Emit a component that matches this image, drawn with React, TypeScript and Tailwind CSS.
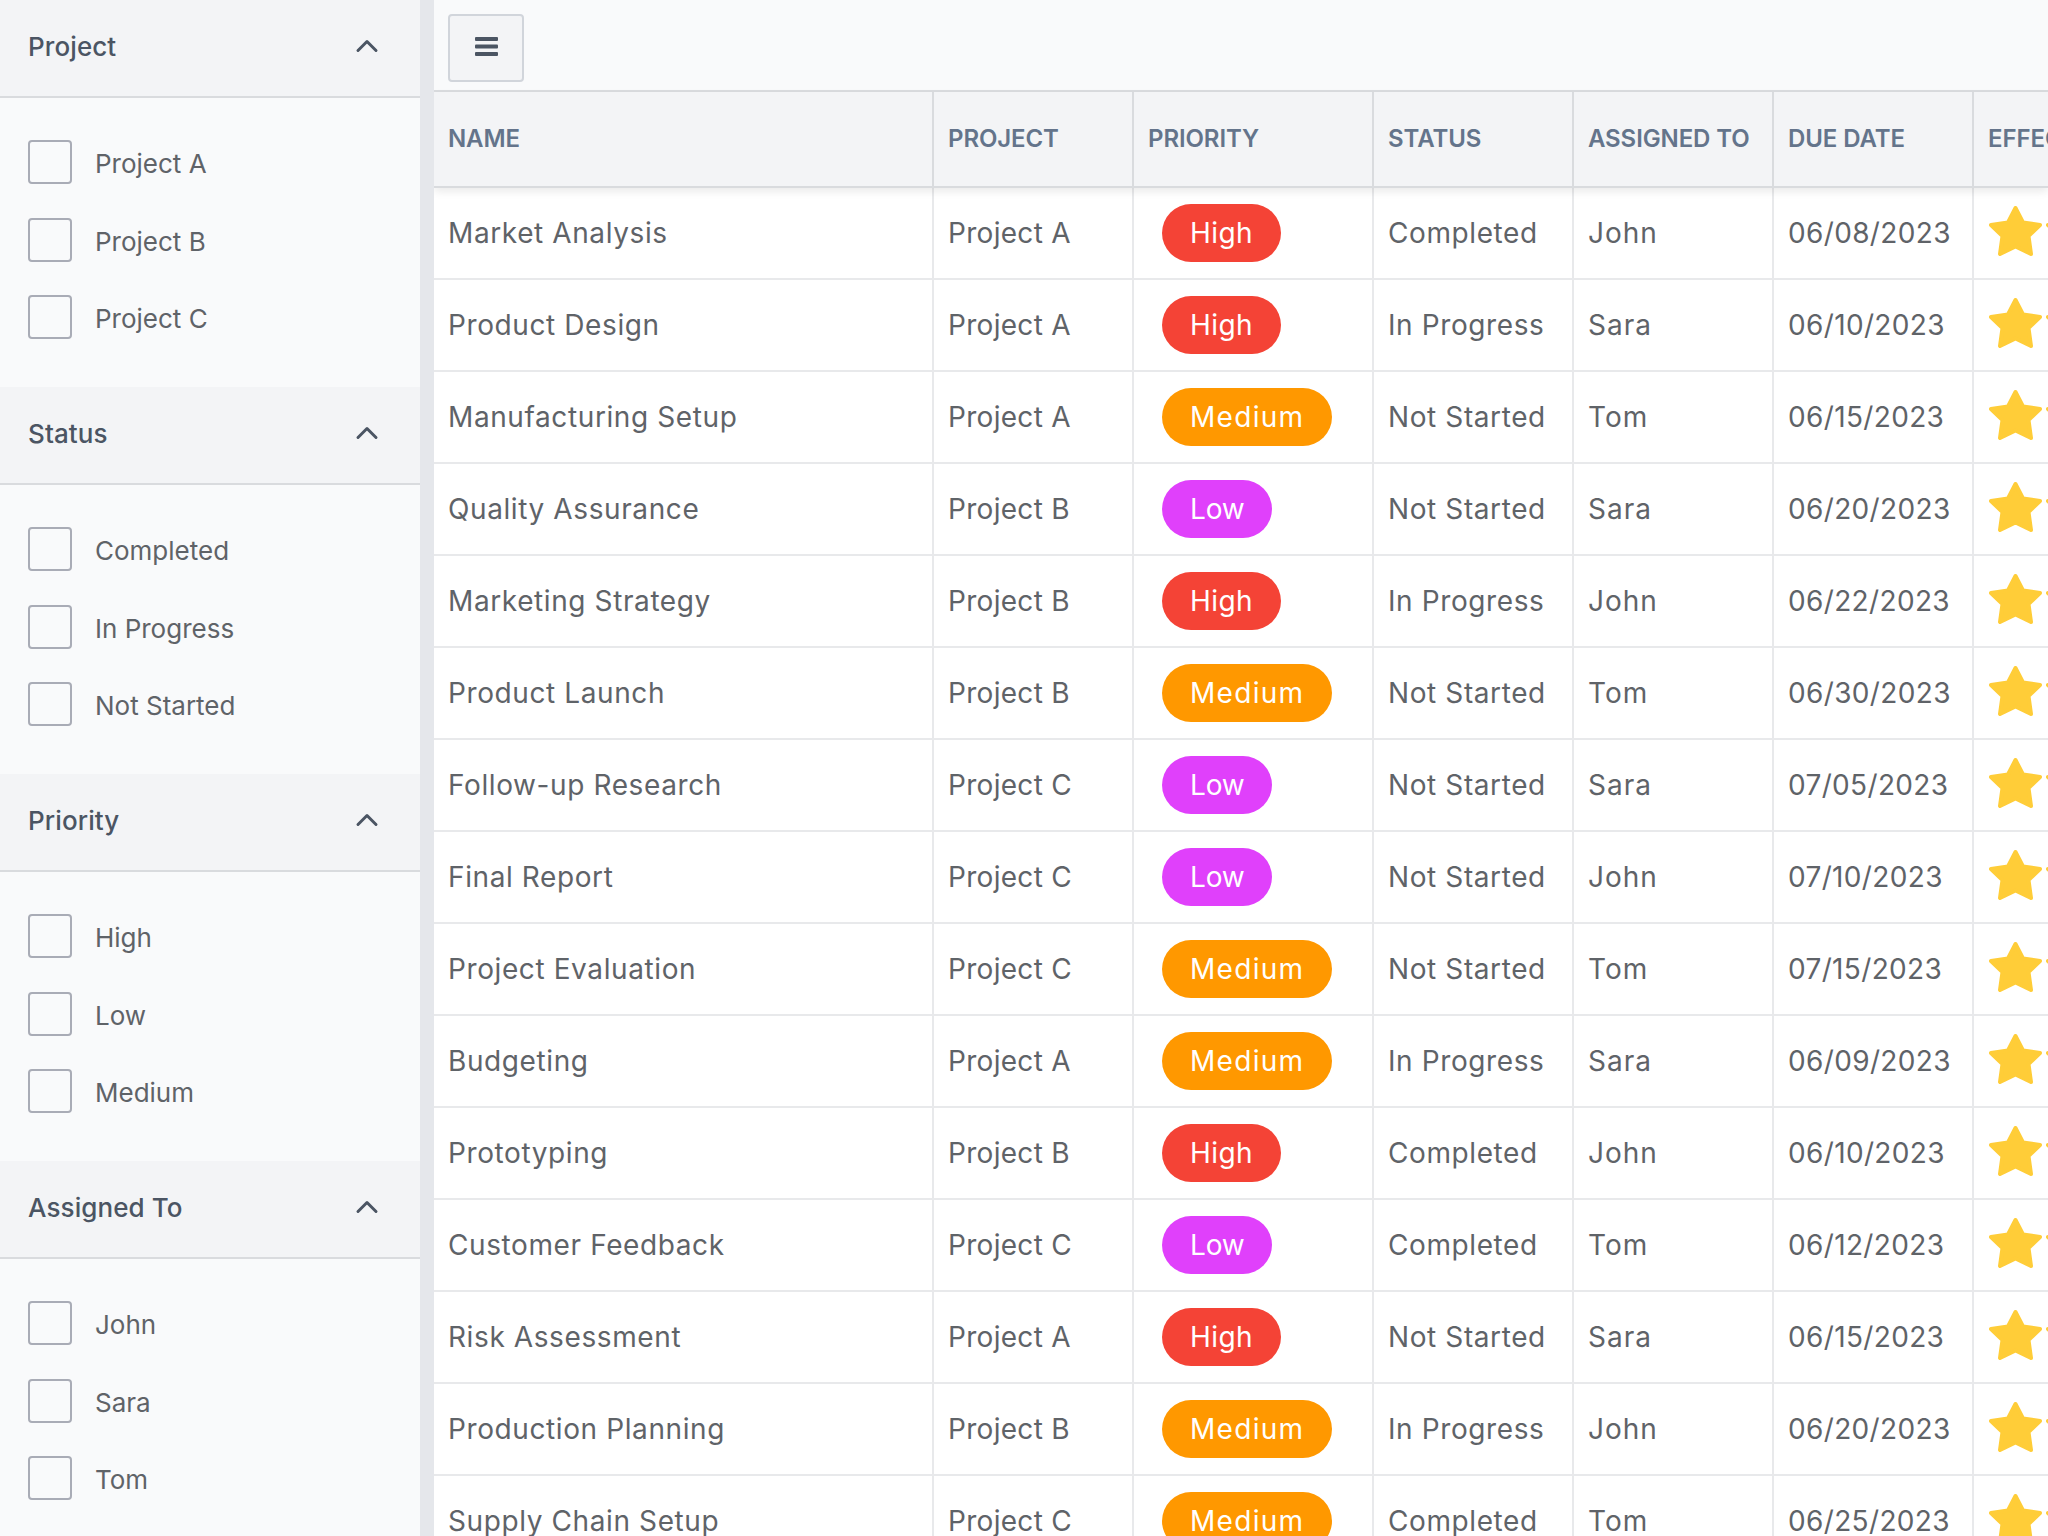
import { ChevronUp } from "lucide-react";

const font = { fontFamily: "Inter, sans-serif" };

type Priority = "High" | "Medium" | "Low";

interface Task {
  name: string;
  project: string;
  priority: Priority;
  status: string;
  assigned: string;
  due: string;
}

const tasks: Task[] = [
  { name: "Market Analysis", project: "Project A", priority: "High", status: "Completed", assigned: "John", due: "06/08/2023" },
  { name: "Product Design", project: "Project A", priority: "High", status: "In Progress", assigned: "Sara", due: "06/10/2023" },
  { name: "Manufacturing Setup", project: "Project A", priority: "Medium", status: "Not Started", assigned: "Tom", due: "06/15/2023" },
  { name: "Quality Assurance", project: "Project B", priority: "Low", status: "Not Started", assigned: "Sara", due: "06/20/2023" },
  { name: "Marketing Strategy", project: "Project B", priority: "High", status: "In Progress", assigned: "John", due: "06/22/2023" },
  { name: "Product Launch", project: "Project B", priority: "Medium", status: "Not Started", assigned: "Tom", due: "06/30/2023" },
  { name: "Follow-up Research", project: "Project C", priority: "Low", status: "Not Started", assigned: "Sara", due: "07/05/2023" },
  { name: "Final Report", project: "Project C", priority: "Low", status: "Not Started", assigned: "John", due: "07/10/2023" },
  { name: "Project Evaluation", project: "Project C", priority: "Medium", status: "Not Started", assigned: "Tom", due: "07/15/2023" },
  { name: "Budgeting", project: "Project A", priority: "Medium", status: "In Progress", assigned: "Sara", due: "06/09/2023" },
  { name: "Prototyping", project: "Project B", priority: "High", status: "Completed", assigned: "John", due: "06/10/2023" },
  { name: "Customer Feedback", project: "Project C", priority: "Low", status: "Completed", assigned: "Tom", due: "06/12/2023" },
  { name: "Risk Assessment", project: "Project A", priority: "High", status: "Not Started", assigned: "Sara", due: "06/15/2023" },
  { name: "Production Planning", project: "Project B", priority: "Medium", status: "In Progress", assigned: "John", due: "06/20/2023" },
  { name: "Supply Chain Setup", project: "Project C", priority: "Medium", status: "Completed", assigned: "Tom", due: "06/25/2023" },
];

const filters = [
  { title: "Project", options: ["Project A", "Project B", "Project C"] },
  { title: "Status", options: ["Completed", "In Progress", "Not Started"] },
  { title: "Priority", options: ["High", "Low", "Medium"] },
  { title: "Assigned To", options: ["John", "Sara", "Tom"] },
];

// tracking per label keeps the pills at the reference widths
const pillStyle: Record<Priority, string> = {
  High: "bg-[#f44336] tracking-[0.4px]",
  Medium: "bg-[#ff9800] tracking-[1.3px]",
  Low: "bg-[#e040fb] tracking-[-0.2px]",
};

const headers = ["NAME", "PROJECT", "PRIORITY", "STATUS", "ASSIGNED TO", "DUE DATE", "EFFECT"];
const cellWidths = ["w-[500px]", "w-[200px]", "w-[240px]", "w-[200px]", "w-[200px]", "w-[200px]", "w-[300px]"];
const textCell = "flex shrink-0 items-center border-r-2 border-[#e8e9eb] pl-[14px]";

function Star() {
  return (
    <svg viewBox="0 0 53 50" className="mb-[4px] h-[50px] w-[53px] shrink-0 fill-[#ffcd38]" stroke="#ffcd38" strokeWidth="4" strokeLinejoin="round">
      <path d="M26.5 2L34 16.5L51 19L39.5 30L42 48L26.5 40.5L11 48L13.5 30L2 19L19 16.5Z" />
    </svg>
  );
}

function FilterSection({ title, options }: { title: string; options: string[] }) {
  return (
    <section>
      <div className="flex h-[98px] items-center justify-between border-b-2 border-[#d9dbde] bg-[#f3f4f6] pl-7 pr-[35px]">
        <span className="pb-[3px] text-[26px] font-medium tracking-[0.1px] text-[#4b5563]">{title}</span>
        <ChevronUp className="mb-[5px] h-[36px] w-[36px] text-[#4b5563]" strokeWidth={2} />
      </div>
      <div className="flex h-[289px] flex-col gap-[33.5px] bg-[#f9fafb] pl-7 pt-[42px]">
        {options.map((o) => (
          <label key={o} className="flex h-[44px] items-center gap-[23px]">
            <span className="h-[44px] w-[44px] rounded border-2 border-[#a9acb6] bg-[#f9fafb]" />
            <span className="pt-[3px] text-[26px] text-[#5f6368]">{o}</span>
          </label>
        ))}
      </div>
    </section>
  );
}

export default function App() {
  return (
    <div className="flex h-[1536px] w-[2048px] overflow-hidden bg-white" style={font}>
      <aside className="w-[420px] shrink-0 overflow-hidden">
        {filters.map((f) => (
          <FilterSection key={f.title} title={f.title} options={f.options} />
        ))}
      </aside>
      <div className="w-[14px] shrink-0 bg-[#e5e7eb]" />
      <main className="min-w-0 flex-1 overflow-hidden">
        <div className="flex h-[92px] items-start border-b-2 border-[#d9dbde] bg-[#f9fafb] pl-[14px] pt-[14px]">
          <button type="button" className="flex h-[68px] w-[76px] items-center justify-center rounded border-2 border-[#d1d5db] bg-[#f3f4f6]">
            <svg viewBox="0 0 23 19" className="mb-[3px] h-[19px] w-[23px] fill-[#4b5563]">
              <rect width="23" height="4" rx="1" />
              <rect y="7.5" width="23" height="4" rx="1" />
              <rect y="15" width="23" height="4" rx="1" />
            </svg>
          </button>
        </div>
        <div className="relative z-10 flex h-[96px] border-b-2 border-[#d9dbde] bg-[#f3f4f6] shadow-[0_4px_8px_rgba(0,0,0,0.08)]">
          {headers.map((h, i) => (
            <div key={h} className={`flex shrink-0 items-center border-[#d9dbde] pl-[14px] text-[24px] font-semibold tracking-[-0.1px] whitespace-nowrap text-[#64748b] ${cellWidths[i]} ${i < 6 ? "border-r-2" : ""}`}>
              {h}
            </div>
          ))}
        </div>
        {tasks.map((t) => (
          <div key={t.name} className="flex h-[92px] border-b-2 border-[#e8e9eb] text-[28px] text-[#5f6368]">
            <div className={`${textCell} tracking-[0.6px] ${cellWidths[0]}`}>{t.name}</div>
            <div className={`${textCell} tracking-[0.3px] ${cellWidths[1]}`}>{t.project}</div>
            <div className={`flex shrink-0 items-center border-r-2 border-[#e8e9eb] pl-[28px] ${cellWidths[2]}`}>
              <span className={`flex h-[58px] items-center rounded-full px-[28px] text-white ${pillStyle[t.priority]}`}>{t.priority}</span>
            </div>
            <div className={`${textCell} tracking-[0.6px] ${cellWidths[3]}`}>{t.status}</div>
            <div className={`${textCell} tracking-[1px] ${cellWidths[4]}`}>{t.assigned}</div>
            <div className={`${textCell} tracking-[0.35px] ${cellWidths[5]}`}>{t.due}</div>
            <div className={`flex shrink-0 items-center gap-[4px] pl-[15px] ${cellWidths[6]}`}>
              <Star />
              <Star />
            </div>
          </div>
        ))}
      </main>
    </div>
  );
}
